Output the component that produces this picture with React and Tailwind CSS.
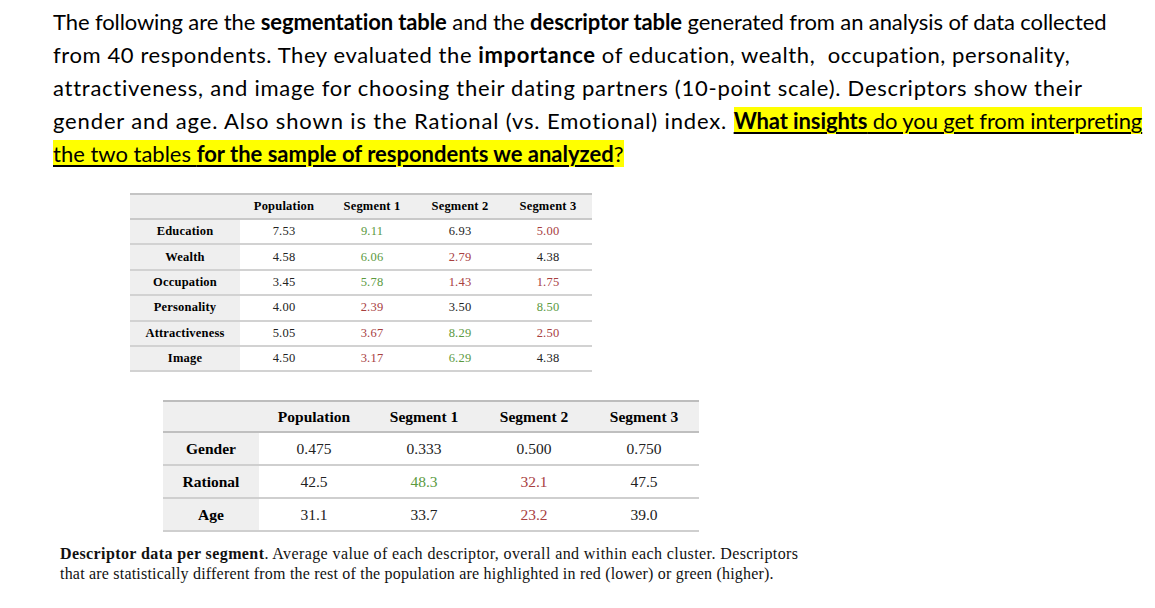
const G = 'text-[#5b9a3f]';
const R = 'text-[#a8403f]';
const N = 'text-[#222]';

const segRows = [
  ['Education', ['7.53', N], ['9.11', G], ['6.93', N], ['5.00', R]],
  ['Wealth', ['4.58', N], ['6.06', G], ['2.79', R], ['4.38', N]],
  ['Occupation', ['3.45', N], ['5.78', G], ['1.43', R], ['1.75', R]],
  ['Personality', ['4.00', N], ['2.39', R], ['3.50', N], ['8.50', G]],
  ['Attractiveness', ['5.05', N], ['3.67', R], ['8.29', G], ['2.50', R]],
  ['Image', ['4.50', N], ['3.17', R], ['6.29', G], ['4.38', N]],
];

const descRows = [
  ['Gender', ['0.475', N], ['0.333', N], ['0.500', N], ['0.750', N]],
  ['Rational', ['42.5', N], ['48.3', G], ['32.1', R], ['47.5', N]],
  ['Age', ['31.1', N], ['33.7', N], ['23.2', R], ['39.0', N]],
];

const heads = ['Population', 'Segment 1', 'Segment 2', 'Segment 3'];

function SegmentTable() {
  return (
    <div className="ml-[130px] mt-[23px] w-[462px] text-[12.5px] tracking-[0.2px] border-t-2 border-[#c4c4c4]" style={{ fontFamily: '"Liberation Serif", serif' }}>
      <div className="grid grid-cols-[110px_repeat(4,88px)] h-[25px] items-center bg-[#efefef] border-b-2 border-[#c9c9c9] font-bold">
        <div />
        {heads.map((h) => (
          <div key={h} className="text-center">{h}</div>
        ))}
      </div>
      {segRows.map(([label, ...vals]) => (
        <div key={label} className="grid grid-cols-[110px_repeat(4,88px)] h-[25.4px] border-b-2 border-[#d2d2d2]">
          <div className="bg-[#efefef] font-bold flex items-center justify-center">{label}</div>
          {vals.map(([v, c], i) => (
            <div key={i} className={`flex items-center justify-center ${c}`}>{v}</div>
          ))}
        </div>
      ))}
    </div>
  );
}

function DescriptorTable() {
  return (
    <div className="ml-[163px] mt-[28px] w-[536px] text-[15.5px] border-t-2 border-[#bdbdbd]" style={{ fontFamily: '"Liberation Serif", serif' }}>
      <div className="grid grid-cols-[96px_repeat(4,110px)] h-[31px] items-center bg-[#efefef] border-b-2 border-[#bfbfbf] font-bold">
        <div />
        {heads.map((h) => (
          <div key={h} className="text-center">{h}</div>
        ))}
      </div>
      {descRows.map(([label, ...vals]) => (
        <div key={label} className="grid grid-cols-[96px_repeat(4,110px)] h-[33px] border-b-2 border-[#cfcfcf]">
          <div className="bg-[#efefef] font-bold flex items-center justify-center">{label}</div>
          {vals.map(([v, c], i) => (
            <div key={i} className={`flex items-center justify-center ${c}`}>{v}</div>
          ))}
        </div>
      ))}
    </div>
  );
}

export default function App() {
  return (
    <div className="w-[1155px] h-[608px] bg-white text-black overflow-hidden">
      <p className="pl-[53px] pt-[5px] text-[22px] leading-[33px] whitespace-nowrap" style={{ fontFamily: 'Lato, "Open Sans", sans-serif' }}>
        <span className="tracking-[-0.1px]">
          The following are the <b>segmentation table</b> and the <b>descriptor table</b> generated from an analysis of data collected
        </span>
        <br />
        <span className="tracking-[0.6px]">
          from 40 respondents. They evaluated the <b>importance</b> of education, wealth,&nbsp; occupation, personality,
        </span>
        <br />
        <span className="tracking-[0.75px]">
          attractiveness, and image for choosing their dating partners (10-point scale). Descriptors show their
        </span>
        <br />
        <span className="tracking-[0.85px]">gender and age. Also shown is the Rational (vs. Emotional) index. </span>
        <span className="bg-[#ffff00] underline decoration-[1.5px] underline-offset-[3px] tracking-[-0.1px]">
          <b>What insights</b> do you get from interpreting
        </span>
        <br />
        <span className="bg-[#ffff00]">
          <span className="underline decoration-[1.5px] underline-offset-[3px]">
            the two tables <b>for the sample of respondents we analyzed</b>
          </span>
          ?
        </span>
      </p>
      <SegmentTable />
      <DescriptorTable />
      <p className="pl-[60px] mt-[12px] text-[16px] leading-[20px] text-[#111] whitespace-nowrap" style={{ fontFamily: '"Liberation Serif", serif' }}>
        <span className="tracking-[0.4px]">
          <b>Descriptor data per segment</b>. Average value of each descriptor, overall and within each cluster. Descriptors
        </span>
        <br />
        <span className="tracking-[0.2px]">
          that are statistically different from the rest of the population are highlighted in red (lower) or green (higher).
        </span>
      </p>
    </div>
  );
}
